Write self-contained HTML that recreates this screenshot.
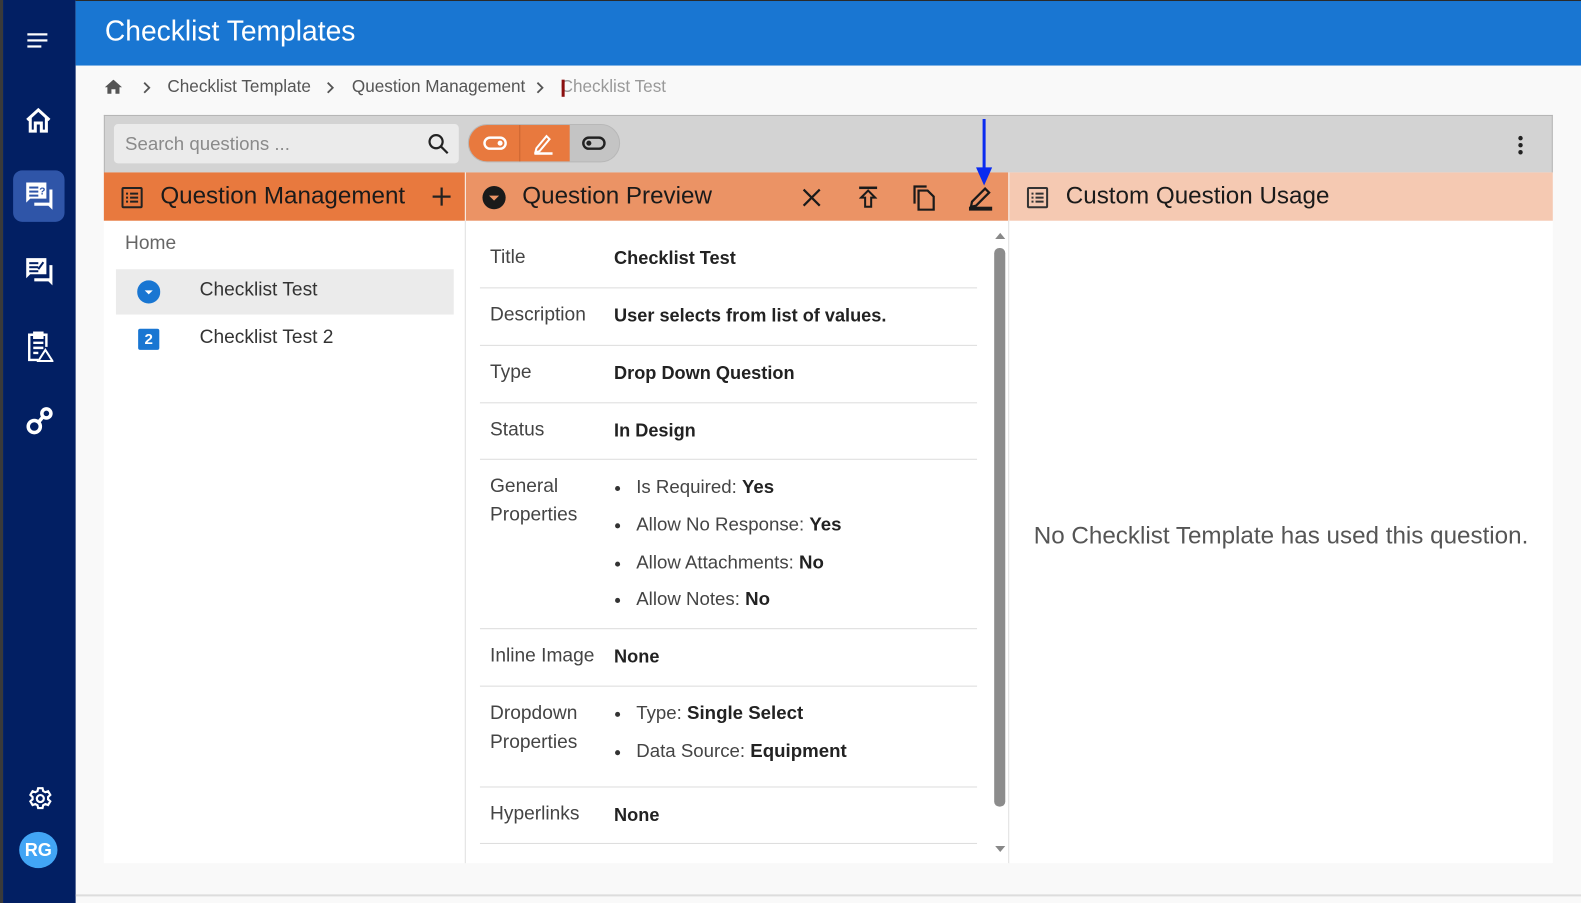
<!DOCTYPE html>
<html><head><meta charset="utf-8"><style>
*{box-sizing:border-box;margin:0;padding:0}
body{width:1581px;height:896px;overflow:hidden;background:#f9f9f9;font-family:"Liberation Sans",Roboto,sans-serif;position:relative;color:#222}
#wrap{position:absolute;left:0;top:0;width:1568px;height:889px;transform:scale(1.0083);transform-origin:0 0}
.abs{position:absolute}
#frame{left:0;top:0;width:3px;height:896px;background:#3a3a3a}
#side{left:3px;top:0;width:72px;height:896px;background:#021f63}
#hdr{left:75px;top:0;right:-20px;height:65px;background:#1976d2;border-top:1px solid #2a2a2a}
#hdr span{position:absolute;left:29px;top:14px;font-size:28px;color:#fff}
.bc{top:76px;font-size:17px;color:#555}
#tb{left:103px;top:114px;width:1437px;height:57px;background:#d3d3d3;border:1px solid #b5b5b5;border-bottom:none}
#search{left:113px;top:123px;width:342px;height:39px;background:#ebebeb;border-radius:4px}
#search span{position:absolute;left:11px;top:9px;font-size:18.5px;color:#8a8a8a}
.ph{top:171px;height:48px}
.ph .t{position:absolute;top:10px;font-size:24px;color:#1a1a1a}
.body{top:219px;height:637px;background:#fff}
.lbl{position:absolute;left:486px;font-size:19px;color:#444;line-height:28px}
.val{position:absolute;left:609px;font-size:18px;color:#222;font-weight:bold;line-height:28px}
.li{position:absolute;left:631px;font-size:18.5px;color:#444;line-height:28px}
.li b{color:#222}
.li:before{content:"";position:absolute;left:-21px;top:13px;width:5px;height:5px;border-radius:50%;background:#333}
.hr{position:absolute;left:476px;width:493px;height:1px;background:#dcdcdc}
</style></head><body><div id="wrap">
<div id="frame" class="abs"></div>
<div id="side" class="abs">
 <svg class="abs" style="left:24px;top:32px" width="22" height="16" viewBox="0 0 22 16"><rect x="0" y="1" width="20" height="2.2" fill="#fff"/><rect x="0" y="7" width="20" height="2.2" fill="#fff"/><rect x="0" y="13" width="14" height="2.2" fill="#fff"/></svg>
 <svg class="abs" style="left:21px;top:105px" width="28" height="28" viewBox="0 0 28 28" fill="none" stroke="#fff" stroke-width="3"><path d="M3 14 L14 4 L25 14 M6 12 V25 H11 V17 H17 V25 H22 V12"/></svg>
 <div class="abs" style="left:10px;top:169px;width:51px;height:51px;border-radius:9px;background:#2f55a8"></div>
 <svg class="abs" style="left:21px;top:179px" width="30" height="32" viewBox="0 0 30 32"><path d="M2 2 H22 V18 H6 L2 22 Z" fill="#fff"/><path d="M25 9 V22 H10 V25 H24 L28 29 V9 Z" fill="#fff"/><rect x="5" y="6" width="9" height="2" fill="#2f55a8"/><rect x="5" y="10" width="9" height="2" fill="#2f55a8"/><rect x="5" y="14" width="9" height="2" fill="#2f55a8"/><text x="15" y="14" font-size="10" font-weight="bold" fill="#2f55a8" font-family="Liberation Sans">?</text></svg>
 <svg class="abs" style="left:21px;top:254px" width="30" height="32" viewBox="0 0 30 32"><path d="M2 2 H22 V18 H6 L2 22 Z" fill="#fff"/><path d="M25 9 V22 H10 V25 H24 L28 29 V9 Z" fill="#fff"/><rect x="5" y="6" width="9" height="2" fill="#021f63"/><rect x="5" y="10" width="9" height="2" fill="#021f63"/><rect x="5" y="14" width="9" height="2" fill="#021f63"/><path d="M14 13 L19 6" stroke="#021f63" stroke-width="2"/></svg>
 <svg class="abs" style="left:22px;top:328px" width="28" height="32" viewBox="0 0 28 32" fill="none" stroke="#fff" stroke-width="2.4"><path d="M9 4 H4 V29 H13 M17 4 H21 V16"/><rect x="9" y="2" width="8" height="5" fill="#fff"/><path d="M8 12 H18 M8 17 H18 M8 22 H13"/><path d="M20 19 L27 30 H13 Z" stroke-width="2"/></svg>
 <svg class="abs" style="left:21px;top:402px" width="30" height="32" viewBox="0 0 30 32" fill="none" stroke="#fff" stroke-width="3.5"><circle cx="10" cy="21" r="6"/><circle cx="22" cy="8" r="4.5"/><path d="M14 17 L19 11"/></svg>
 <svg class="abs" style="left:24px;top:779px" width="26" height="26" viewBox="0 0 24 24" fill="none" stroke="#fff" stroke-width="2"><circle cx="12" cy="12" r="3.2"/><path d="M10 2.5h4l.6 2.6 2 1.1 2.5-.9 2 3.4-2 1.8v2.2l2 1.8-2 3.4-2.5-.9-2 1.1-.6 2.6h-4l-.6-2.6-2-1.1-2.5.9-2-3.4 2-1.8v-2.2l-2-1.8 2-3.4 2.5.9 2-1.1z"/></svg>
 <div class="abs" style="left:16px;top:825px;width:38px;height:36px;border-radius:50%;background:#42a5f5;color:#fff;font-weight:bold;font-size:18px;text-align:center;line-height:36px">RG</div>
</div>
<div id="hdr" class="abs"><span>Checklist Templates</span></div>
<svg class="abs" style="left:104px;top:79px" width="17" height="15" viewBox="0 0 17 15"><path d="M8.5 0 L17 7.5 H14.5 V14 H10.5 V9.5 H6.5 V14 H2.5 V7.5 H0 Z" fill="#555"/></svg>
<svg class="abs" style="left:140px;top:80px" width="10" height="14" viewBox="0 0 10 14" fill="none" stroke="#555" stroke-width="1.8"><path d="M3 2 L8 7 L3 12"/></svg>
<div class="abs bc" style="left:166px">Checklist Template</div>
<svg class="abs" style="left:322px;top:80px" width="10" height="14" viewBox="0 0 10 14" fill="none" stroke="#555" stroke-width="1.8"><path d="M3 2 L8 7 L3 12"/></svg>
<div class="abs bc" style="left:349px">Question Management</div>
<svg class="abs" style="left:530px;top:80px" width="10" height="14" viewBox="0 0 10 14" fill="none" stroke="#555" stroke-width="1.8"><path d="M3 2 L8 7 L3 12"/></svg>
<div class="abs bc" style="left:556px;color:#999">Checklist Test</div>
<div class="abs" style="left:557px;top:79px;width:3px;height:17px;background:#8b1010"></div>
<div id="tb" class="abs"></div>
<div id="search" class="abs"><span>Search questions ...</span>
<svg class="abs" style="left:311px;top:9px" width="22" height="22" viewBox="0 0 22 22" fill="none" stroke="#222" stroke-width="2.2"><circle cx="8.5" cy="8.5" r="6.5"/><path d="M13.5 13.5 L20 20"/></svg></div>
<div class="abs" style="left:464px;top:123px;width:151px;height:38px;border-radius:19px;background:#c4c4c4;border:1px solid #b8b8b8;overflow:hidden">
 <div class="abs" style="left:0;top:0;width:100px;height:38px;background:#e8793e"></div>
 <div class="abs" style="left:50px;top:0;width:1px;height:38px;background:#c96530"></div>
 <svg class="abs" style="left:14px;top:11px" width="24" height="14" viewBox="0 0 24 14" fill="none" stroke="#fff" stroke-width="2.4"><rect x="1.5" y="1.5" width="21" height="11" rx="5.5"/><circle cx="17" cy="7" r="2.5" fill="#fff" stroke="none"/></svg>
 <svg class="abs" style="left:63px;top:8px" width="22" height="22" viewBox="0 0 22 22"><path d="M4 15 L14 3 L17 6 L7 18 L3 19 Z" fill="none" stroke="#fff" stroke-width="2"/><rect x="2" y="19" width="18" height="2.5" fill="#fff"/></svg>
 <svg class="abs" style="left:112px;top:11px" width="24" height="14" viewBox="0 0 24 14" fill="none" stroke="#222" stroke-width="2.4"><rect x="1.5" y="1.5" width="21" height="11" rx="5.5"/><circle cx="7" cy="7" r="2.5" fill="#222" stroke="none"/></svg>
</div>
<svg class="abs" style="left:1505px;top:134px" width="6" height="20" viewBox="0 0 6 20" fill="#222"><circle cx="3" cy="3" r="2.2"/><circle cx="3" cy="10" r="2.2"/><circle cx="3" cy="17" r="2.2"/></svg>

<div class="abs ph" style="left:103px;width:358px;background:#e8793e">
 <svg class="abs" style="left:17px;top:14px" width="22" height="22" viewBox="0 0 22 22" fill="none" stroke="#222" stroke-width="2"><rect x="1.5" y="1.5" width="19" height="19" rx="1"/><path d="M5 7h2M9 7h8M5 11h2M9 11h8M5 15h2M9 15h8"/></svg>
 <span class="t" style="left:56px">Question Management</span>
 <svg class="abs" style="left:326px;top:15px" width="18" height="18" viewBox="0 0 18 18" stroke="#222" stroke-width="2.2"><path d="M9 0V18M0 9H18"/></svg>
</div>
<div class="abs ph" style="left:462px;width:538px;background:#eb9365">
 <svg class="abs" style="left:16px;top:13px" width="24" height="24" viewBox="0 0 24 24"><circle cx="12" cy="12" r="11.5" fill="#1a1a1a"/><path d="M7 10 H17 L12 15 Z" fill="#eb9365"/></svg>
 <span class="t" style="left:56px">Question Preview</span>
 <svg class="abs" style="left:334px;top:16px" width="18" height="18" viewBox="0 0 18 18" stroke="#1a1a1a" stroke-width="2.2"><path d="M1 1L17 17M17 1L1 17"/></svg>
 <svg class="abs" style="left:390px;top:14px" width="18" height="22" viewBox="0 0 18 22"><rect x="0" y="0" width="18" height="2.5" fill="#1a1a1a"/><path d="M9 4 L16 11 H12 V20 H6 V11 H2 Z" fill="none" stroke="#1a1a1a" stroke-width="2"/></svg>
 <svg class="abs" style="left:442px;top:12px" width="24" height="26" viewBox="0 0 24 26" fill="none" stroke="#1a1a1a" stroke-width="2.2"><path d="M3 19V2H15"/><path d="M7 6H16L22 12V25H7Z"/></svg>
 <svg class="abs" style="left:498px;top:12px" width="26" height="26" viewBox="0 0 26 26"><path d="M4 17 L17 4 L21 8 L8 21 L3 22 Z" fill="none" stroke="#1a1a1a" stroke-width="2.2"/><rect x="1" y="22" width="23" height="4" fill="#1a1a1a"/></svg>
</div>
<div class="abs ph" style="left:1001px;width:539px;background:#f5c9b2">
 <svg class="abs" style="left:17px;top:14px" width="22" height="22" viewBox="0 0 22 22" fill="none" stroke="#333" stroke-width="2"><rect x="1.5" y="1.5" width="19" height="19" rx="1"/><path d="M5 7h2M9 7h8M5 11h2M9 11h8M5 15h2M9 15h8"/></svg>
 <span class="t" style="left:56px">Custom Question Usage</span>
</div>
<svg class="abs" style="left:968px;top:118px" width="16" height="68" viewBox="0 0 16 68"><rect x="6.5" y="0" width="3" height="52" fill="#0a2bf0"/><path d="M0 48 H16 L8 66 Z" fill="#0a2bf0"/></svg>

<div class="abs body" style="left:103px;width:358px">
 <div class="abs" style="left:21px;top:12px;font-size:19px;color:#666">Home</div>
 <div class="abs" style="left:12px;top:48px;width:335px;height:45px;background:#ebebeb"></div>
 <svg class="abs" style="left:33px;top:59px" width="23" height="23" viewBox="0 0 23 23"><circle cx="11.5" cy="11.5" r="11.5" fill="#1976d2"/><path d="M7.5 10 H15.5 L11.5 14 Z" fill="#fff"/></svg>
 <div class="abs" style="left:95px;top:58px;font-size:19px;color:#333">Checklist Test</div>
 <div class="abs" style="left:34px;top:107px;width:21px;height:21px;border-radius:2px;background:#1976d2;color:#fff;font-weight:bold;font-size:15px;text-align:center;line-height:21px">2</div>
 <div class="abs" style="left:95px;top:105px;font-size:19px;color:#333">Checklist Test 2</div>
</div>
<div class="abs" style="left:461px;top:219px;width:1px;height:637px;background:#ddd"></div>
<div class="abs body" style="left:462px;width:538px"></div>
<div class="abs" style="left:1000px;top:219px;width:1px;height:637px;background:#ddd"></div>
<div class="abs body" style="left:1001px;width:539px">
 <div class="abs" style="left:0;width:539px;top:299px;text-align:center;font-size:24px;color:#555">No Checklist Template has used this question.</div>
</div>
<div class="abs" style="left:986px;top:246px;width:11px;height:554px;border-radius:5px;background:#8c8c8c"></div>
<svg class="abs" style="left:986px;top:230px" width="12" height="8"><path d="M1 7H11L6 1Z" fill="#888"/></svg>
<svg class="abs" style="left:986px;top:838px" width="12" height="8"><path d="M1 1H11L6 7Z" fill="#888"/></svg>

<div class="lbl" style="top:242px">Title</div><div class="val" style="top:242px">Checklist Test</div>
<div class="hr" style="top:285px"></div>
<div class="lbl" style="top:299px">Description</div><div class="val" style="top:299px">User selects from list of values.</div>
<div class="hr" style="top:342px"></div>
<div class="lbl" style="top:356px">Type</div><div class="val" style="top:356px">Drop Down Question</div>
<div class="hr" style="top:399px"></div>
<div class="lbl" style="top:413px">Status</div><div class="val" style="top:413px">In Design</div>
<div class="hr" style="top:455px"></div>
<div class="lbl" style="top:469px">General<br>Properties</div>
<div class="li" style="top:469px">Is Required: <b>Yes</b></div>
<div class="li" style="top:506px">Allow No Response: <b>Yes</b></div>
<div class="li" style="top:544px">Allow Attachments: <b>No</b></div>
<div class="li" style="top:580px">Allow Notes: <b>No</b></div>
<div class="hr" style="top:623px"></div>
<div class="lbl" style="top:637px">Inline Image</div><div class="val" style="top:637px">None</div>
<div class="hr" style="top:680px"></div>
<div class="lbl" style="top:693px;line-height:29px">Dropdown<br>Properties</div>
<div class="li" style="top:693px">Type: <b>Single Select</b></div>
<div class="li" style="top:731px">Data Source: <b>Equipment</b></div>
<div class="hr" style="top:780px"></div>
<div class="lbl" style="top:794px">Hyperlinks</div><div class="val" style="top:794px">None</div>
<div class="hr" style="top:836px"></div>
<div class="abs" style="left:75px;top:887px;right:-20px;height:2px;background:#ddd"></div>
</div></body></html>
